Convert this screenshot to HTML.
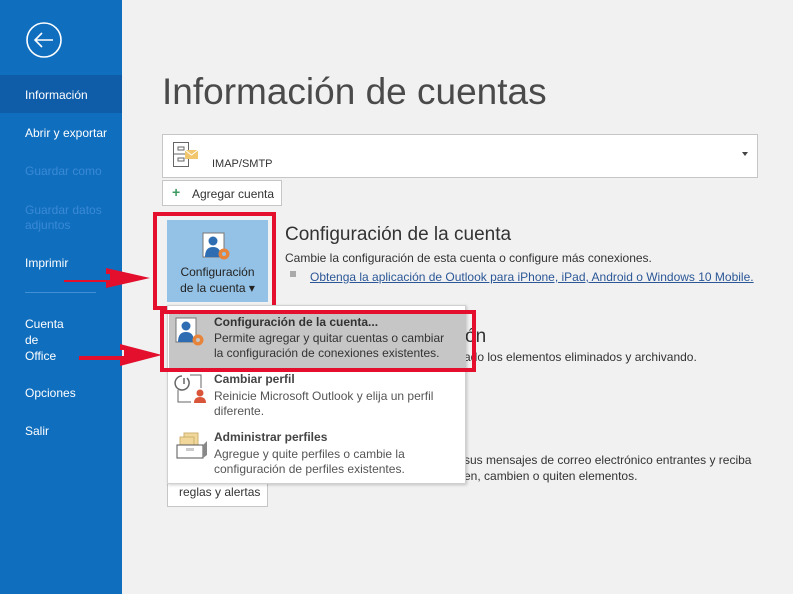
<!DOCTYPE html>
<html><head><meta charset="utf-8"><style>
*{margin:0;padding:0;box-sizing:border-box}
body{width:793px;height:594px;overflow:hidden;background:#f1f1f1;font-family:"Liberation Sans",sans-serif;position:relative;color:#262626}
.a{position:absolute;white-space:nowrap}
#side{left:0;top:0;width:122px;height:594px;background:#106ebe}
.nav{position:absolute;left:25px;color:#fff;font-size:12px}
.dim{color:#3a8ad6}
.t{font-size:12px;color:#333}
</style></head><body>
<div class="a" id="side"></div>
<svg class="a" style="left:25px;top:21px" width="38" height="38"><circle cx="19" cy="19" r="17" fill="none" stroke="#fff" stroke-width="1.6"/><path d="M10 19H28M17 12L10 19L17 26" fill="none" stroke="#fff" stroke-width="1.6"/></svg>
<div class="a" style="left:0;top:75px;width:122px;height:38px;background:#0f5ca8"></div>
<div class="nav" style="top:88px">Información</div>
<div class="nav" style="top:126px">Abrir y exportar</div>
<div class="nav dim" style="top:164px">Guardar como</div>
<div class="nav dim" style="top:203px;line-height:15px">Guardar datos<br>adjuntos</div>
<div class="nav" style="top:256px">Imprimir</div>
<div class="a" style="left:25px;top:292px;width:71px;height:1px;background:#3f8fd6"></div>
<div class="nav" style="top:316px;line-height:16px">Cuenta<br>de<br>Office</div>
<div class="nav" style="top:386px">Opciones</div>
<div class="nav" style="top:424px">Salir</div>

<div class="a" style="left:162px;top:71px;font-size:37px;font-weight:300;color:#4a4a4a">Información de cuentas</div>
<div class="a" style="left:162px;top:134px;width:596px;height:44px;background:#fff;border:1px solid #c6c6c6"></div>
<svg class="a" style="left:171px;top:140px" width="30" height="30"><rect x="2.5" y="2.5" width="15" height="24" fill="#fff" stroke="#666"/><line x1="2.5" y1="14" x2="17.5" y2="14" stroke="#666"/><rect x="7" y="7" width="6" height="3" fill="none" stroke="#666"/><rect x="7" y="18" width="6" height="3" fill="none" stroke="#666"/><rect x="14" y="10" width="13" height="9" fill="#f2c66d"/><path d="M14 10L20.5 15L27 10" stroke="#fff" fill="none"/></svg>
<div class="a t" style="left:212px;top:158px;font-size:11px">IMAP/SMTP</div>
<div class="a" style="left:742px;top:152px;border:3px solid transparent;border-top:4px solid #444"></div>
<div class="a" style="left:162px;top:180px;width:120px;height:26px;background:#fff;border:1px solid #c6c6c6"></div>
<div class="a" style="left:172px;top:184px;color:#3c9a5f;font-weight:bold;font-size:14px">+</div>
<div class="a t" style="left:192px;top:187px">Agregar cuenta</div>

<div class="a" style="left:167px;top:220px;width:101px;height:82px;background:#94c2e6"></div>
<svg class="a" style="left:200px;top:230px" width="34" height="34"><rect x="3" y="3" width="21" height="24" fill="#fff" stroke="#777"/><circle cx="13" cy="11" r="4.5" fill="#2f6db3"/><path d="M5 27Q5 17 13 17Q21 17 21 27Z" fill="#2f6db3"/><circle cx="24" cy="24" r="5.5" fill="#e8833a"/><circle cx="24" cy="24" r="2" fill="#94c2e6"/></svg>
<div class="a" style="left:167px;top:264px;width:101px;text-align:center;font-size:12px;line-height:16px;color:#222">Configuración<br>de la cuenta ▾</div>
<div class="a" style="left:153px;top:212px;width:123px;height:98px;border:4px solid #e30f2d"></div>

<div class="a" style="left:285px;top:224px;font-size:19px;color:#333">Configuración de la cuenta</div>
<div class="a t" style="left:285px;top:251px">Cambie la configuración de esta cuenta o configure más conexiones.</div>
<div class="a" style="left:290px;top:271px;width:6px;height:6px;background:#aaa"></div>
<div class="a t" style="left:310px;top:270px;color:#2b5797;text-decoration:underline">Obtenga la aplicación de Outlook para iPhone, iPad, Android o Windows 10 Mobile.</div>

<div class="a" style="left:465px;top:326px;font-size:19px;color:#333">ón</div>
<div class="a t" style="left:464px;top:350px">ado los elementos eliminados y archivando.</div>
<div class="a t" style="left:464px;top:453px">sus mensajes de correo electrónico entrantes y reciba</div>
<div class="a t" style="left:464px;top:469px">en, cambien o quiten elementos.</div>
<div class="a" style="left:167px;top:478px;width:101px;height:29px;background:#fff;border:1px solid #c6c6c6"></div>
<div class="a t" style="left:179px;top:485px">reglas y alertas</div>

<div class="a" style="left:167px;top:305px;width:299px;height:179px;background:#fff;border:1px solid #d0d0d0;box-shadow:1px 1px 3px rgba(0,0,0,.2)"></div>
<div class="a" style="left:169px;top:313px;width:297px;height:55px;background:#c6c6c6"></div>
<svg class="a" style="left:173px;top:316px" width="36" height="34"><rect x="3" y="2" width="20" height="24" fill="#fff" stroke="#777"/><circle cx="13" cy="10" r="4.5" fill="#2f6db3"/><path d="M5 26Q5 16 13 16Q21 16 21 26Z" fill="#2f6db3"/><circle cx="25" cy="24" r="5.5" fill="#e8833a"/><circle cx="25" cy="24" r="2" fill="#c6c6c6"/></svg>
<div class="a" style="left:214px;top:315px;font-size:12px;font-weight:bold;color:#333">Configuración de la cuenta...</div>
<div class="a" style="left:214px;top:331px;font-size:12px;line-height:15px;color:#333">Permite agregar y quitar cuentas o cambiar<br>la configuración de conexiones existentes.</div>
<svg class="a" style="left:173px;top:372px" width="36" height="34"><path d="M9 4A7 7 0 1 0 14 6" fill="none" stroke="#666" stroke-width="1.5"/><path d="M11 6V12" stroke="#666" stroke-width="1.5"/><path d="M17 3H28V16M5 18V30H18" fill="none" stroke="#666"/><circle cx="27" cy="21" r="3.5" fill="#d9553a"/><path d="M21 31Q21 25 27 25Q33 25 33 31Z" fill="#d9553a"/></svg>
<div class="a" style="left:214px;top:372px;font-size:12px;font-weight:bold;color:#444">Cambiar perfil</div>
<div class="a" style="left:214px;top:389px;font-size:12px;line-height:15px;color:#555">Reinicie Microsoft Outlook y elija un perfil<br>diferente.</div>
<svg class="a" style="left:174px;top:430px" width="36" height="34"><rect x="10" y="3" width="14" height="16" fill="#f1d79a" stroke="#ccb070"/><rect x="6" y="7" width="14" height="16" fill="#f1d79a" stroke="#ccb070"/><rect x="3" y="15" width="26" height="13" fill="#fff" stroke="#555"/><path d="M29 15L33 11V25L29 28" fill="#888"/><rect x="12" y="18" width="8" height="3" fill="#ccc"/></svg>
<div class="a" style="left:214px;top:430px;font-size:12px;font-weight:bold;color:#444">Administrar perfiles</div>
<div class="a" style="left:214px;top:447px;font-size:12px;line-height:15px;color:#555">Agregue y quite perfiles o cambie la<br>configuración de perfiles existentes.</div>
<div class="a" style="left:160px;top:310px;width:316px;height:62px;border:4px solid #e30f2d"></div>

<svg class="a" style="left:0;top:0" width="200" height="400"><path d="M64 280H110V274H106L106 268L150 278L106 288V282H64Z" fill="#e30f2d"/><path d="M79 356H124V350H120L120 344L162 355L120 366V360H79Z" fill="#e30f2d"/></svg>
</body></html>
